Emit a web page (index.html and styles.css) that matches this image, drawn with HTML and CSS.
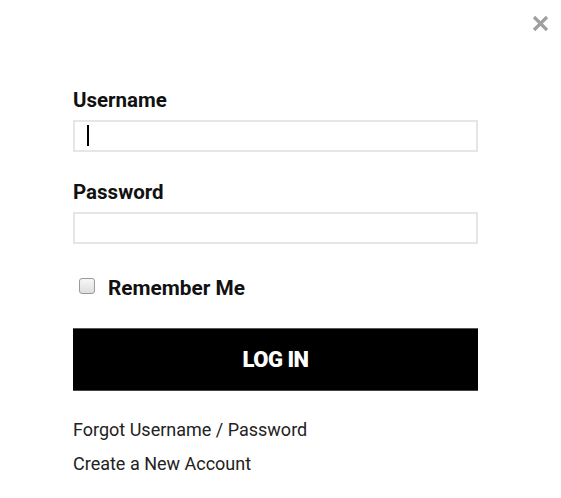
FILE: index.html
```html
<!DOCTYPE html>
<html lang="en">
<head>
    <meta charset="utf-8" />
    <title>Log In</title>
    <link rel="stylesheet" href="styles.css">
</head>
<body>

    <div class="modal">
        <button class="close" aria-label="Close">
            <svg width="17" height="17" viewBox="0 0 17 17">
                <path d="M2 2 L15 15 M15 2 L2 15" stroke="#a0a0a0" stroke-width="3.2" />
            </svg>
        </button>

        <form class="login">
            <label class="label" for="username">Username</label>
            <div class="field">
                <input class="input" id="username" type="text">
                <span class="caret"></span>
            </div>

            <label class="label" for="password">Password</label>
            <div class="field">
                <input class="input" id="password" type="password">
            </div>

            <label class="remember">
                <span class="check"></span>
                Remember Me
            </label>

            <button class="submit" type="button">LOG IN</button>

            <a class="link" href="#">Forgot Username / Password</a>
            <a class="link" href="#">Create a New Account</a>
        </form>
    </div>

</body>
</html>
```

FILE: styles.css
```css
body {
    margin: 0;
    background: #fff;
    font-family: Roboto, "Liberation Sans", sans-serif;
    color: #111;
}

.modal {
    position: relative;
    width: 561px;
    height: 498px;
}

/* close button in the corner */
.close {
    position: absolute;
    top: 15px;
    right: 12px;
    padding: 0;
    border: none;
    background: none;
    line-height: 0;
}

.login {
    display: flex;
    flex-direction: column;
    width: 405px;
    padding: 88px 0 0 73px;
}

.label {
    font-size: 20.5px;
    font-weight: 700;
    line-height: 24px;
    margin-bottom: 8px;
}

.field {
    position: relative;
    margin-bottom: 28px;
}

.input {
    display: block;
    box-sizing: border-box;
    width: 100%;
    height: 32px;
    border: 2px solid #e6e6e6;
    margin: 0;
    background: #fff;
}

.caret {
    position: absolute;
    left: 14px;
    top: 5px;
    width: 1.5px;
    height: 21px;
    background: #000;
}

.remember {
    display: flex;
    align-items: center;
    font-size: 20.8px;
    font-weight: 700;
    margin: 2px 0 0 6px;
    line-height: 28px;
}

.check {
    box-sizing: border-box;
    width: 16px;
    height: 16px;
    border: 1px solid #9a9a9a;
    border-radius: 3px;
    background: linear-gradient(#f6f6f6, #dedede);
    margin-right: 13px;
    margin-top: -4px;
}

.submit {
    margin-top: 26px;
    height: 63px;
    border: none;
    border-top: 1px solid #555;
    border-bottom: 1px solid #444;
    background: #000;
    color: #fff;
    font-family: Roboto, "Liberation Sans", sans-serif;
    font-size: 22px;
    font-weight: 900;
    letter-spacing: -0.5px;
}

.link {
    color: #222;
    text-decoration: none;
    font-size: 18px;
    line-height: 34px;
}

.submit + .link {
    margin-top: 22px;
}
```
